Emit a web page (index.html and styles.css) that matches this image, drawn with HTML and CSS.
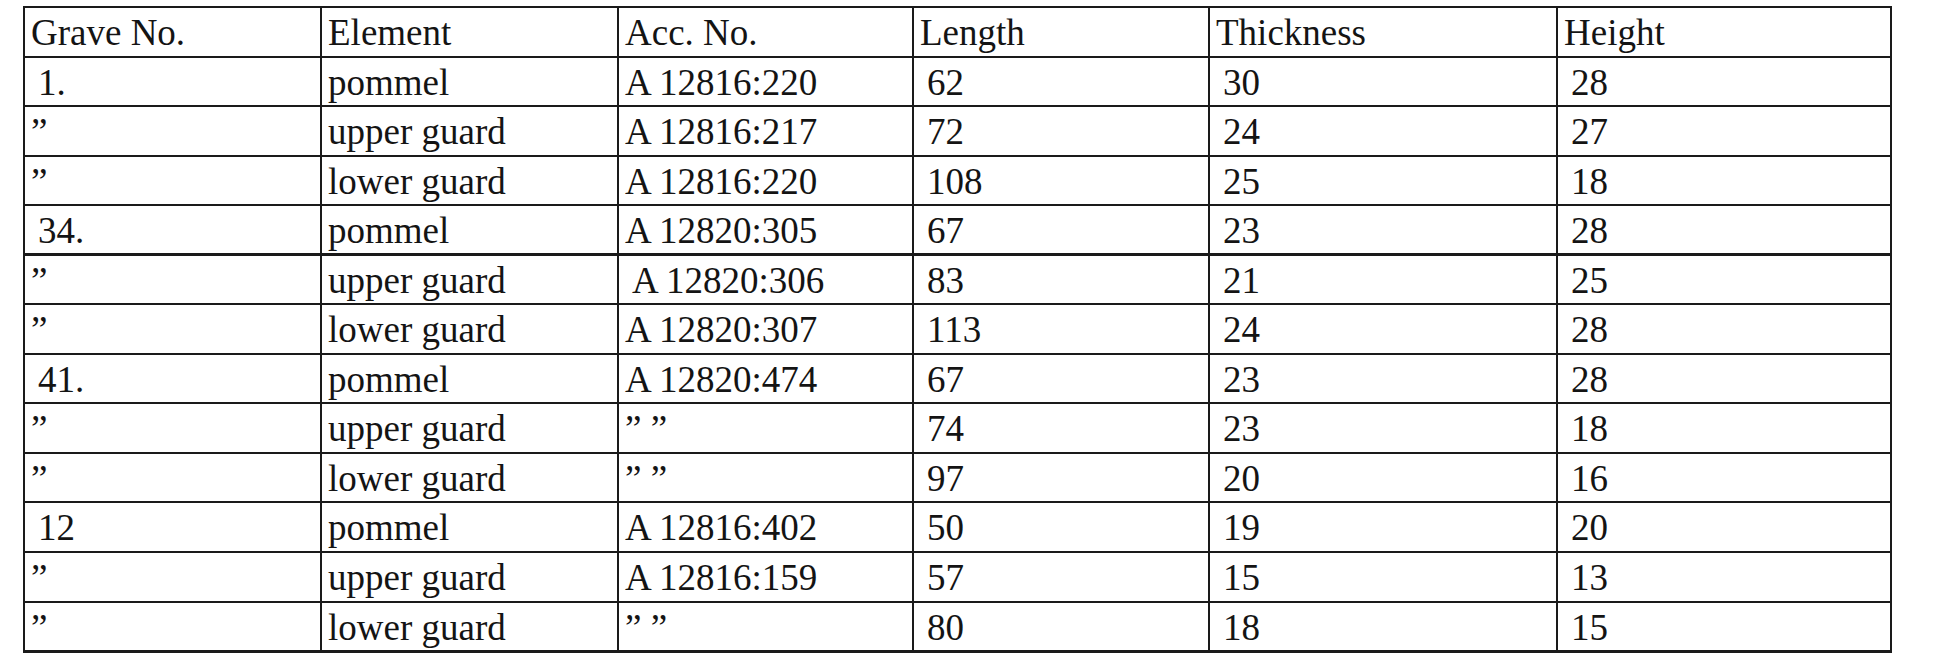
FILE: index.html
```html
<!DOCTYPE html>
<html>
<head>
<meta charset="utf-8">
<link rel="stylesheet" href="styles.css">
</head>
<body>
<table class="data">
  <colgroup>
    <col class="c1"><col class="c2"><col class="c3"><col class="c4"><col class="c5"><col class="c6">
  </colgroup>
  <tr class="head"><td>Grave No.</td><td>Element</td><td>Acc. No.</td><td>Length</td><td>Thickness</td><td>Height</td></tr>
  <tr><td class="sp">1.</td><td>pommel</td><td>A 12816:220</td><td class="sp">62</td><td class="sp">30</td><td class="sp">28</td></tr>
  <tr><td>”</td><td>upper guard</td><td>A 12816:217</td><td class="sp">72</td><td class="sp">24</td><td class="sp">27</td></tr>
  <tr><td>”</td><td>lower guard</td><td>A 12816:220</td><td class="sp">108</td><td class="sp">25</td><td class="sp">18</td></tr>
  <tr class="thick"><td class="sp">34.</td><td>pommel</td><td>A 12820:305</td><td class="sp">67</td><td class="sp">23</td><td class="sp">28</td></tr>
  <tr><td>”</td><td>upper guard</td><td class="sp">A 12820:306</td><td class="sp">83</td><td class="sp">21</td><td class="sp">25</td></tr>
  <tr><td>”</td><td>lower guard</td><td>A 12820:307</td><td class="sp">113</td><td class="sp">24</td><td class="sp">28</td></tr>
  <tr><td class="sp">41.</td><td>pommel</td><td>A 12820:474</td><td class="sp">67</td><td class="sp">23</td><td class="sp">28</td></tr>
  <tr><td>”</td><td>upper guard</td><td>” ”</td><td class="sp">74</td><td class="sp">23</td><td class="sp">18</td></tr>
  <tr><td>”</td><td>lower guard</td><td>” ”</td><td class="sp">97</td><td class="sp">20</td><td class="sp">16</td></tr>
  <tr><td class="sp">12</td><td>pommel</td><td>A 12816:402</td><td class="sp">50</td><td class="sp">19</td><td class="sp">20</td></tr>
  <tr><td>”</td><td>upper guard</td><td>A 12816:159</td><td class="sp">57</td><td class="sp">15</td><td class="sp">13</td></tr>
  <tr class="last"><td>”</td><td>lower guard</td><td>” ”</td><td class="sp">80</td><td class="sp">18</td><td class="sp">15</td></tr>
</table>
</body>
</html>
```

FILE: styles.css
```css
html, body {
  margin: 0;
  padding: 0;
  background: #ffffff;
}

body {
  padding: 6px 0 0 23px;
  font-family: "Liberation Serif", "Times New Roman", serif;
  color: #141414;
}

.data {
  border-collapse: collapse;
  table-layout: fixed;
  width: 1867px;
}

.c1 { width: 297px; }
.c2 { width: 297px; }
.c3 { width: 295px; }
.c4 { width: 296px; }
.c5 { width: 348px; }
.c6 { width: 334px; }

.data tr {
  height: 49.55px;
}

.data td {
  border: 2px solid #1a1a1a;
  padding: 4px 0 0 6px;
  vertical-align: top;
  font-size: 37px;
  line-height: 42px;
  white-space: nowrap;
  overflow: hidden;
}

.data td.sp {
  padding-left: 13px;
}

.data tr.thick td {
  border-bottom-width: 3px;
}

.data tr.last td {
  border-bottom-width: 3px;
}
```
